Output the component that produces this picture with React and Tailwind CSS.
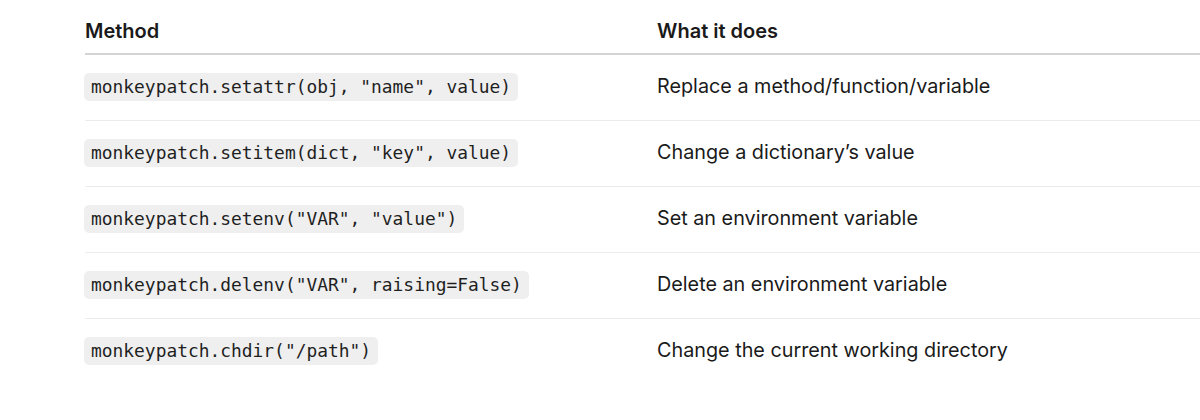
const ROWS = [
  { code: 'monkeypatch.setattr(obj, "name", value)', desc: 'Replace a method/function/variable' },
  { code: 'monkeypatch.setitem(dict, "key", value)', desc: 'Change a dictionary\u2019s value' },
  { code: 'monkeypatch.setenv("VAR", "value")', desc: 'Set an environment variable' },
  { code: 'monkeypatch.delenv("VAR", raising=False)', desc: 'Delete an environment variable' },
  { code: 'monkeypatch.chdir("/path")', desc: 'Change the current working directory' },
];

export default function App() {
  return (
    <div className="w-[1200px] h-[420px] bg-white overflow-hidden pl-[85px] font-['Inter',sans-serif] text-[#1a1a1a]">
      <table className="w-[1115px] border-collapse">
        <thead>
          <tr className="h-[54px] border-b-2 border-[#d4d4d4]">
            <th className="w-[572px] text-left align-bottom font-semibold text-[20px] leading-[24px] pb-[10px]">Method</th>
            <th className="text-left align-bottom font-semibold text-[20px] leading-[24px] pb-[10px]">What it does</th>
          </tr>
        </thead>
        <tbody>
          {ROWS.map((r, i) => (
            <tr key={i} className={`h-[66px] ${i < ROWS.length - 1 ? 'border-b border-[#ececec]' : ''}`}>
              <td className="align-middle">
                <code className="inline-block bg-[#efefef] rounded-[5px] px-[7px] py-[2px] font-['DejaVu_Sans_Mono',monospace] text-[17.9px] leading-[24px] text-[#1f1f1f] -ml-[1px]">
                  {r.code}
                </code>
              </td>
              <td className="align-middle text-[19.8px]">{r.desc}</td>
            </tr>
          ))}
        </tbody>
      </table>
    </div>
  );
}
